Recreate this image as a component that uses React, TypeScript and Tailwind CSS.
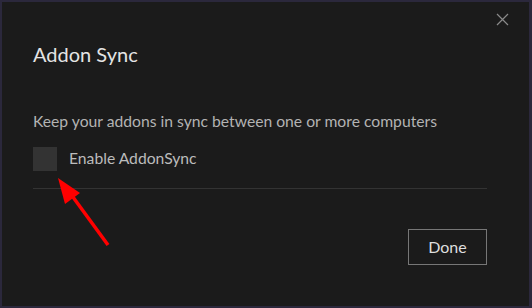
import React from 'react';

const App: React.FC = () => {
  return (
    <div className="relative w-[532px] h-[308px] bg-[#1b1b1b] border-2 border-r-[3px] border-[#2b283c] font-['Lato','Liberation_Sans',sans-serif] overflow-hidden">
      {/* close */}
      <button className="absolute right-[20px] top-[11px] w-[13px] h-[13px] text-[#8a8a8a]">
        <svg viewBox="0 0 13 13" width="13" height="13" fill="none" stroke="currentColor" strokeWidth="1.2">
          <path d="M1 1 L12 12 M12 1 L1 12" />
        </svg>
      </button>

      <div className="pl-[31px] pr-[42px] pt-[38px]">
        <h2 className="text-[20px] leading-[28px] text-[#e4e4e4]">Addon Sync</h2>

        <p className="mt-[42px] text-[15.7px] leading-[22px] text-[#b3b3b3]">
          Keep your addons in sync between one or more computers
        </p>

        <label className="mt-[15px] flex items-center gap-[12px]">
          <span className="w-[24px] h-[24px] bg-[#333333] shrink-0" />
          <span className="text-[15.7px] text-[#bcbcbc]">Enable AddonSync</span>
        </label>

        <div className="mt-[17px] h-px bg-[#333333]" />

        <div className="mt-[40px] flex justify-end">
          <button className="w-[79px] h-[36px] border border-[#777777] text-[16px] text-[#dedede]">
            Done
          </button>
        </div>
      </div>

      {/* red annotation arrow */}
      <svg className="absolute left-0 top-0 pointer-events-none" width="532" height="308">
        <line x1="106" y1="243" x2="68" y2="191" stroke="#ff0000" strokeWidth="3.5" />
        <polygon points="56,176 63,202 78,191" fill="#ff0000" />
      </svg>
    </div>
  );
};

export default App;
